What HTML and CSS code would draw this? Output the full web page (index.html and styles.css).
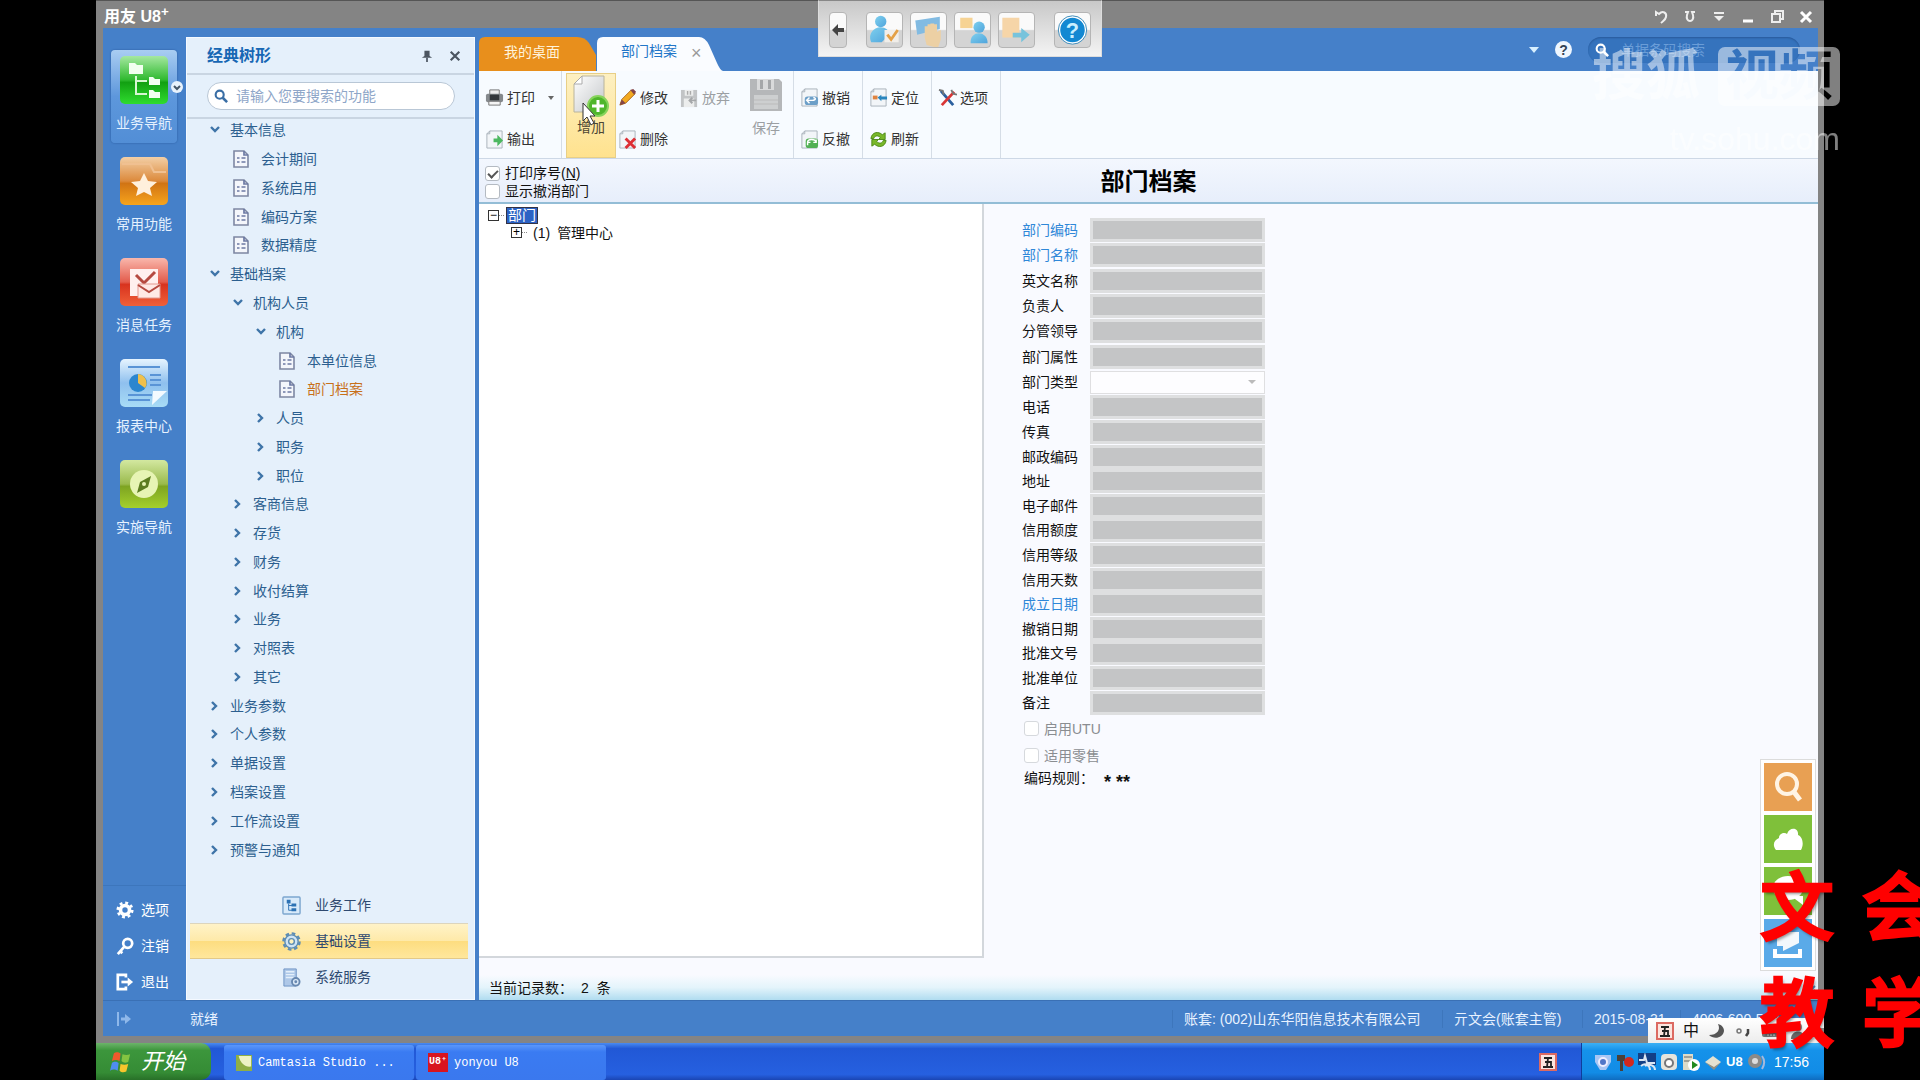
FILE: index.html
```
<!DOCTYPE html>
<html lang="zh-CN">

<head>
  <meta charset="UTF-8">
  <meta name="viewport" content="width=device-width, initial-scale=1.0">
  <title>部门档案</title>
  <link rel="stylesheet" href="styles.css">
</head>

<body>

  <!-- shared icons -->
  <svg class="defs" aria-hidden="true">
    <defs>
      <linearGradient id="green" x2="0" y2="1"><stop offset="0" stop-color="#a5e8a0"/><stop offset=".5" stop-color="#2fb92f"/><stop offset=".55" stop-color="#12a012"/><stop offset="1" stop-color="#2fdc2f"/></linearGradient>
      <linearGradient id="orange" x2="0" y2="1"><stop offset="0" stop-color="#f3cfa6"/><stop offset=".5" stop-color="#dc8a3c"/><stop offset=".55" stop-color="#d17414"/><stop offset="1" stop-color="#f7a41c"/></linearGradient>
      <linearGradient id="red" x2="0" y2="1"><stop offset="0" stop-color="#f9b7ac"/><stop offset=".5" stop-color="#e35c4c"/><stop offset=".55" stop-color="#d8331f"/><stop offset="1" stop-color="#f06038"/></linearGradient>
      <linearGradient id="sky" x2="0" y2="1"><stop offset="0" stop-color="#e6f4ff"/><stop offset=".5" stop-color="#8fc0ee"/><stop offset="1" stop-color="#a8dcf6"/></linearGradient>
      <linearGradient id="lime" x2="0" y2="1"><stop offset="0" stop-color="#d3e8a0"/><stop offset=".5" stop-color="#9aba4c"/><stop offset=".55" stop-color="#7ea422"/><stop offset="1" stop-color="#a4d02c"/></linearGradient>
      <linearGradient id="paper" x2="1" y2="1"><stop offset="0" stop-color="#fff"/><stop offset="1" stop-color="#c3c6c9"/></linearGradient>
      <linearGradient id="cyan" x2="1" y2="1"><stop offset="0" stop-color="#7fd0ee"/><stop offset="1" stop-color="#4fa4dc"/></linearGradient>
    </defs>
    <symbol id="down" viewBox="0 0 12 12"><path d="M2 3l4 4 4-4" fill="none" stroke="#3e74a8" stroke-width="2.4"/></symbol>
    <symbol id="right" viewBox="0 0 12 12"><path d="M3 2l4 4-4 4" fill="none" stroke="#3e74a8" stroke-width="2.4"/></symbol>
    <symbol id="doc" viewBox="0 0 16 18"><path d="M1 1h10l4 4v12H1z" fill="#f4f6fb" stroke="#7d87a3" stroke-width="1.6"/><path d="M11 1v4h4M4 8h2.500M4 12h2.500M8.500 8h4M8.500 12h4" fill="none" stroke="#6c7aa4" stroke-width="1.700"/></symbol>
    <symbol id="lens" viewBox="0 0 16 16"><circle cx="6.500" cy="6.500" r="4.600" fill="none" stroke="currentColor" stroke-width="2.400"/><path d="M10 10l5 5" stroke="currentColor" stroke-width="3"/></symbol>
    <symbol id="sheet" viewBox="0 0 20 20"><path d="M5 1h13v18H2V4z" fill="#f2f5f8" stroke="#a9b2ba"/><path d="M5 1v3H2" fill="none" stroke="#a9b2ba"/></symbol>
    <symbol id="wubi" viewBox="0 0 18 18"><path d="M1 1h16v16H1z" fill="#fbe5df" stroke="#dc6a62" stroke-width="2"/><path d="M5 5h8M9 5l-1 9M6 9h6v5M4 14h10" fill="none" stroke="#222" stroke-width="1.800"/></symbol>
  </svg>

  <div class="screen">

    <header class="titlebar">
      <span class="brand">用友 <b>U8</b><sup>+</sup></span>
      <div class="window-tools">
        <button aria-label="撤回"><svg viewBox="0 0 16 16"><path d="M3 7V3l3 2c4-4 8-1 7 3-.5 3-3 4-5 6" fill="none" stroke="#eee" stroke-width="2"/></svg></button>
        <button aria-label="磁吸"><svg viewBox="0 0 16 16"><path d="M3 3h3L5 6c-2 8 8 8 6 0l-1-3h3" fill="none" stroke="#eee" stroke-width="2"/></svg></button>
        <button aria-label="菜单" class="split"><svg viewBox="0 0 16 16"><path d="M3 4h10" stroke="#eee" stroke-width="2"/><path d="M3 7h10l-5 5z" fill="#eee"/></svg></button>
        <button aria-label="最小化"><svg viewBox="0 0 16 16"><path d="M3 12h10" stroke="#fff" stroke-width="3"/></svg></button>
        <button aria-label="还原"><svg viewBox="0 0 16 16"><path d="M6 5V2h8v8h-3M3 5h8v8H3z" fill="none" stroke="#eee" stroke-width="2"/></svg></button>
        <button aria-label="关闭"><svg viewBox="0 0 16 16"><path d="M3 3l10 10M13 3L3 13" stroke="#fff" stroke-width="3"/></svg></button>
      </div>
    </header>

    <div class="app">
      <nav class="rail">
        <a href="#" class="rail-item active">
          <svg viewBox="0 0 48 48"><rect width="48" height="48" rx="5" fill="url(#green)"/><path d="M9 7h6l2 2h6v9H9zM29 21h4l2 2h5v6H29zM29 34h4l2 2h5v6H29z" fill="#f2fff0"/><path d="M16 20v18h11M16 25h11" fill="none" stroke="#d6f7d2" stroke-width="2"/></svg>
          业务导航
          <svg class="rail-more" viewBox="0 0 12 12"><circle cx="6" cy="6" r="6" fill="#e8f2fc"/><path d="M3 5l3 3 3-3" fill="none" stroke="#456" stroke-width="2"/></svg>
        </a>
        <a href="#" class="rail-item">
          <svg viewBox="0 0 48 48"><rect width="48" height="48" rx="5" fill="url(#orange)"/><path d="M2 7h28l4 8h12" fill="none" stroke="#f0c091" stroke-width="2"/><path d="M24 16l4 8 9 1-7 6 2 8-8-4-8 4 2-8-7-6 9-1z" fill="#fff0dc"/></svg>
          常用功能
        </a>
        <a href="#" class="rail-item">
          <svg viewBox="0 0 48 48"><rect width="48" height="48" rx="5" fill="url(#red)"/><path d="M10 11h28v27H10z" fill="#fff0ee"/><path d="M16 17l8 8 11-11" fill="none" stroke="#b54a40" stroke-width="3"/><path d="M18 26h22v14H18z" fill="#ffe9e5" stroke="#e39a90"/><path d="M18 27l11 7 11-7" fill="none" stroke="#b54a40" stroke-width="2"/></svg>
          消息任务
        </a>
        <a href="#" class="rail-item">
          <svg viewBox="0 0 48 48"><rect width="48" height="48" rx="5" fill="url(#sky)"/><path d="M8 8h32M30 16h11M30 21h11M30 26h11M8 36h24M8 41h22" stroke="#5a94d6" stroke-width="2"/><circle cx="18" cy="24" r="9" fill="#2c86cf"/><path d="M18 24v-9a9 9 0 0 1 7 14z" fill="#f0c04c"/><path d="M32 46l1-14h14z" fill="#f3faff"/></svg>
          报表中心
        </a>
        <a href="#" class="rail-item">
          <svg viewBox="0 0 48 48"><rect width="48" height="48" rx="5" fill="url(#lime)"/><circle cx="24" cy="24" r="14" fill="#e7f4b4"/><path d="M31 16l-3 11-11 6 3-11z" fill="#5c7c20"/><circle cx="24" cy="24" r="2" fill="#e7f4b4"/></svg>
          实施导航
        </a>
        <div class="rail-tools">
          <button><svg viewBox="0 0 20 20"><circle cx="10" cy="10" r="5" fill="none" stroke="#fff" stroke-width="4"/><circle cx="10" cy="10" r="8" fill="none" stroke="#fff" stroke-width="3" stroke-dasharray="3.200 3.080"/></svg>选项</button>
          <button><svg viewBox="0 0 20 20"><circle cx="13" cy="7" r="5" fill="none" stroke="#fff" stroke-width="3"/><path d="M9 11l-7 8M4 15l3 3" stroke="#fff" stroke-width="3"/></svg>注销</button>
          <button><svg viewBox="0 0 20 20"><path d="M11 5V2H2v16h9v-3" fill="none" stroke="#fff" stroke-width="3"/><path d="M6 10h8" stroke="#fff" stroke-width="3"/><path d="M13 5l6 5-6 5z" fill="#fff"/></svg>退出</button>
        </div>
      </nav>

      <aside class="panel">
        <div class="panel-head">
          <h2>经典树形</h2>
          <button aria-label="固定"><svg viewBox="0 0 14 14"><path d="M4 1h6v6l3 2H1l3-2z" fill="#4c5560"/><path d="M7 9v5" stroke="#4c5560" stroke-width="2"/></svg></button>
          <button aria-label="关闭面板"><svg viewBox="0 0 14 14"><path d="M2 2l10 10M12 2L2 12" stroke="#4c5560" stroke-width="2.500"/></svg></button>
        </div>
        <div class="panel-search">
          <label><svg><use href="#lens"/></svg><input type="text" placeholder="请输入您要搜索的功能" aria-label="搜索功能"></label>
        </div>
        <ul class="tree">
          <li><a href="#"><svg><use href="#down"/></svg>基本信息</a></li>
          <li class="leaf"><a href="#"><svg><use href="#doc"/></svg>会计期间</a></li>
          <li class="leaf"><a href="#"><svg><use href="#doc"/></svg>系统启用</a></li>
          <li class="leaf"><a href="#"><svg><use href="#doc"/></svg>编码方案</a></li>
          <li class="leaf"><a href="#"><svg><use href="#doc"/></svg>数据精度</a></li>
          <li><a href="#"><svg><use href="#down"/></svg>基础档案</a></li>
          <li class="level-1"><a href="#"><svg><use href="#down"/></svg>机构人员</a></li>
          <li class="level-2"><a href="#"><svg><use href="#down"/></svg>机构</a></li>
          <li class="leaf leaf-deep"><a href="#"><svg><use href="#doc"/></svg>本单位信息</a></li>
          <li class="leaf leaf-deep current"><a href="#"><svg><use href="#doc"/></svg>部门档案</a></li>
          <li class="level-2"><a href="#"><svg><use href="#right"/></svg>人员</a></li>
          <li class="level-2"><a href="#"><svg><use href="#right"/></svg>职务</a></li>
          <li class="level-2"><a href="#"><svg><use href="#right"/></svg>职位</a></li>
          <li class="level-1"><a href="#"><svg><use href="#right"/></svg>客商信息</a></li>
          <li class="level-1"><a href="#"><svg><use href="#right"/></svg>存货</a></li>
          <li class="level-1"><a href="#"><svg><use href="#right"/></svg>财务</a></li>
          <li class="level-1"><a href="#"><svg><use href="#right"/></svg>收付结算</a></li>
          <li class="level-1"><a href="#"><svg><use href="#right"/></svg>业务</a></li>
          <li class="level-1"><a href="#"><svg><use href="#right"/></svg>对照表</a></li>
          <li class="level-1"><a href="#"><svg><use href="#right"/></svg>其它</a></li>
          <li><a href="#"><svg><use href="#right"/></svg>业务参数</a></li>
          <li><a href="#"><svg><use href="#right"/></svg>个人参数</a></li>
          <li><a href="#"><svg><use href="#right"/></svg>单据设置</a></li>
          <li><a href="#"><svg><use href="#right"/></svg>档案设置</a></li>
          <li><a href="#"><svg><use href="#right"/></svg>工作流设置</a></li>
          <li><a href="#"><svg><use href="#right"/></svg>预警与通知</a></li>
        </ul>
        <div class="modules">
          <button><svg viewBox="0 0 20 20"><rect x="1" y="1" width="18" height="18" rx="1" fill="#d8eafa" stroke="#7ca6cf" stroke-width="1.500"/><path d="M5 4h4v4H5zM10 8h5v3h-5zM10 13h5v3h-5z" fill="#2c72b4"/><path d="M7 8v7h4M7 10h4" fill="none" stroke="#2c72b4"/></svg>业务工作</button>
          <button class="active"><svg viewBox="0 0 20 20"><circle cx="10" cy="10" r="8.500" fill="none" stroke="#5c8cb4" stroke-width="2.500" stroke-dasharray="3.800 2.870"/><circle cx="10" cy="10" r="7" fill="#cfe4f4" stroke="#5c8cb4" stroke-width="1.500"/><circle cx="10" cy="10" r="3" fill="#fff3c0" stroke="#5c8cb4" stroke-width="1.500"/></svg>基础设置</button>
          <button><svg viewBox="0 0 20 20"><path d="M2 1h13v18H2z" fill="#aec8e8" stroke="#6f93c4"/><path d="M4 4h9M4 7h9M4 10h9" stroke="#e4effa" stroke-width="1.500"/><circle cx="14.500" cy="14.500" r="4" fill="#dbe9f7" stroke="#6888b0" stroke-width="2"/><circle cx="14.500" cy="14.500" r="1.500" fill="#6888b0"/></svg>系统服务</button>
        </div>
      </aside>

      <main class="content">
        <div class="tabs">
          <button class="tab tab-home">我的桌面</button>
          <button class="tab tab-current">部门档案 <span class="tab-close">×</span></button>
          <div class="top-tools">
            <button class="caret" aria-label="展开"></button>
            <button class="help" aria-label="帮助">?</button>
            <label class="top-search"><svg><use href="#lens"/></svg><input type="text" placeholder="单据条码搜索" aria-label="单据条码搜索"></label>
          </div>
        </div>

        <div class="toolbar">
          <div class="tool-group print">
            <button class="tool"><svg viewBox="0 0 20 20"><path d="M5 2h10v5H5z" fill="#eee" stroke="#777"/><rect x="1" y="6" width="18" height="9" rx="2" fill="#85898d"/><path d="M5 7h10v6H5z" fill="#33373b"/><path d="M4 14h12v4H4z" fill="#f4f4f4" stroke="#777"/></svg>打印<i class="tool-caret"></i></button>
            <button class="tool"><svg viewBox="0 0 20 20"><use href="#sheet"/><path d="M9 9h4V5l6 6-6 6v-4H9z" fill="#4cb860"/></svg>输出</button>
          </div>
          <button class="tool-big hot">
            <svg viewBox="0 0 36 42"><path d="M9 1h22v36H1V9z" fill="url(#paper)" stroke="#b9b49c"/><path d="M9 1v8H1z" fill="#fff" stroke="#aaa"/><circle cx="25" cy="31" r="10" fill="#4fb62c" stroke="#87d45c" stroke-width="2"/><path d="M19 31h12M25 25v12" stroke="#fff" stroke-width="3"/></svg>
            增加
          </button>
          <div class="tool-group edit">
            <button class="tool"><svg viewBox="0 0 20 20"><path d="M2 18l2-6L14 2l4 4L8 16z" fill="#f3aa20" stroke="#a9651a"/><path d="M2 18l2-6 4 4zM13 2l3-1 3 3-2 3z" fill="#83444a"/></svg>修改</button>
            <button class="tool"><svg viewBox="0 0 20 20"><use href="#sheet"/><path d="M8 9l10 10M18 9L8 19" stroke="#dd2f35" stroke-width="3"/></svg>删除</button>
          </div>
          <div class="tool-group discard">
            <button class="tool" disabled><svg viewBox="0 0 20 20"><path d="M1 1h17v18H1z" fill="#c2c4c6"/><path d="M5 1h9v6H5zM4 10h11v9H4z" fill="#eceded"/><path d="M8 2v4M11 2v4" stroke="#aaa" stroke-width="1.500"/><path d="M17 12h-7m3-3l-3 3 3 3" fill="none" stroke="#a5a7a9" stroke-width="2"/></svg>放弃</button>
          </div>
          <button class="tool-big save" disabled>
            <svg viewBox="0 0 32 32"><path d="M0 0h29l3 3v29H0z" fill="#b5b7b9"/><path d="M7 0h17v11H7z" fill="#d9dadb"/><path d="M10 1h3v9h-3zM18 1h3v9h-3z" fill="#a5a7a9"/><path d="M4 16h24v14H4z" fill="#cdcfd0"/><path d="M4 21h24M4 25h24" stroke="#bbb"/></svg>
            保存
          </button>
          <div class="tool-group">
            <button class="tool"><svg viewBox="0 0 20 20"><use href="#sheet"/><rect x="5" y="9" width="14" height="9" rx="3" fill="#6c9fc8"/><path d="M10 10l-3 3 3 3M8 13h5c4 0 4-3 1-3" fill="none" stroke="#fff" stroke-width="1.500"/></svg>撤销</button>
            <button class="tool"><svg viewBox="0 0 20 20"><use href="#sheet"/><rect x="6" y="9" width="13" height="10" rx="3" fill="#52b054"/><path d="M8 13c0-4 8-4 9 0M17 10v3h-3M8 16v-3h3" fill="none" stroke="#fff" stroke-width="1.500"/></svg>反撤</button>
          </div>
          <div class="tool-group">
            <button class="tool"><svg viewBox="0 0 20 20"><use href="#sheet"/><path d="M4 8h5v4H4z" fill="#de8340"/><path d="M9 10l4-3v2h6v3h-6v2z" fill="#2a86be"/></svg>定位</button>
            <button class="tool"><svg viewBox="0 0 20 20"><path d="M2 9c1-7 8-8 12-4l3-2v7h-7l2-2C9 5 6 6 5 9zM18 11c-1 7-8 8-12 4l-3 2v-7h7l-2 2c3 3 6 2 7-1z" fill="#79b829" stroke="#4d8a18"/></svg>刷新</button>
          </div>
          <div class="tool-group">
            <button class="tool"><svg viewBox="0 0 20 20"><path d="M3 2l13 15" stroke="#2b5f9e" stroke-width="3"/><path d="M17 3L4 17" stroke="#d93636" stroke-width="3"/><path d="M1 1l4 1 1 4M14 1l2 4 4 1" fill="none" stroke="#777" stroke-width="2"/></svg>选项</button>
          </div>
        </div>

        <div class="page-head">
          <div class="page-options">
            <label><input type="checkbox" checked><span>打印序号(<u>N</u>)</span></label>
            <label><input type="checkbox"><span>显示撤消部门</span></label>
          </div>
          <h1>部门档案</h1>
        </div>

        <div class="page-body">
          <div class="departments">
            <div class="dept"><button class="toggle" aria-label="折叠">−</button><span class="selected">部门</span></div>
            <div class="dept dept-child"><button class="toggle" aria-label="展开">+</button><span>(1)</span><span>管理中心</span></div>
          </div>

          <form class="details">
            <div class="fields fields-basic">
              <div class="field required"><label for="code">部门编码</label><input id="code" disabled></div>
              <div class="field required"><label for="name">部门名称</label><input id="name" disabled></div>
              <div class="field"><label for="ename">英文名称</label><input id="ename" disabled></div>
              <div class="field"><label for="head">负责人</label><input id="head" disabled></div>
              <div class="field"><label for="leader">分管领导</label><input id="leader" disabled></div>
              <div class="field"><label for="attr">部门属性</label><input id="attr" disabled></div>
              <div class="field"><label for="kind">部门类型</label><span class="select-wrap"><select id="kind" disabled><option></option></select></span></div>
            </div>
            <div class="fields fields-more">
              <div class="field"><label for="tel">电话</label><input id="tel" disabled></div>
              <div class="field"><label for="fax">传真</label><input id="fax" disabled></div>
              <div class="field"><label for="zip">邮政编码</label><input id="zip" disabled></div>
              <div class="field"><label for="addr">地址</label><input id="addr" disabled></div>
              <div class="field"><label for="mail">电子邮件</label><input id="mail" disabled></div>
              <div class="field"><label for="credit">信用额度</label><input id="credit" disabled></div>
              <div class="field"><label for="grade">信用等级</label><input id="grade" disabled></div>
              <div class="field"><label for="days">信用天数</label><input id="days" disabled></div>
              <div class="field required"><label for="start">成立日期</label><input id="start" disabled></div>
              <div class="field"><label for="end">撤销日期</label><input id="end" disabled></div>
              <div class="field"><label for="docno">批准文号</label><input id="docno" disabled></div>
              <div class="field"><label for="unit">批准单位</label><input id="unit" disabled></div>
              <div class="field"><label for="memo">备注</label><input id="memo" disabled></div>
            </div>
            <label class="flag"><input type="checkbox" disabled>启用UTU</label>
            <label class="flag"><input type="checkbox" disabled>适用零售</label>
            <p class="rule">编码规则： <b>* **</b></p>
          </form>

          <div class="float-tools">
            <button class="f-search" aria-label="搜索"><svg viewBox="0 0 48 48"><circle cx="23" cy="21" r="10" fill="none" stroke="#fff4e4" stroke-width="4"/><path d="M30 29l6 8" stroke="#fff4e4" stroke-width="5"/></svg></button>
            <button class="f-cloud" aria-label="云"><svg viewBox="0 0 48 48"><path d="M12 35c-4-5-2-10 3-12 0-5 6-6 8-4 3-8 12-6 11 1 5 2 6 10 3 15z" fill="#fff"/></svg></button>
            <button class="f-cloud" aria-label="消息"><svg viewBox="0 0 48 48"><ellipse cx="24" cy="21" rx="15" ry="12" fill="#fff"/><path d="M27 29h12v9z" fill="#fff"/></svg></button>
            <button class="f-edit" aria-label="编辑"><svg viewBox="0 0 48 48"><path d="M11 30v7h25v-7" fill="none" stroke="#fff" stroke-width="4"/><path d="M13 13h22v11L19 32v-5h-6z" fill="#f3f8fc"/></svg></button>
          </div>
        </div>

        <footer class="record-bar">
          <span>当前记录数：</span>
          <span>2</span>
          <span>条</span>
          <svg viewBox="0 0 12 12"><path d="M1 11L11 1M5 11l6-6M9 11l2-2" stroke="#5b84b5" stroke-width="2"/></svg>
        </footer>
      </main>
    </div>

    <div class="statusbar">
      <svg viewBox="0 0 14 14"><path d="M1 0v14" stroke="#8fb8ea" stroke-width="2"/><path d="M4 7h5" stroke="#8fb8ea" stroke-width="3"/><path d="M8 2l6 5-6 5z" fill="#8fb8ea"/></svg>
      <span class="ready">就绪</span>
      <span class="cell account">账套: (002)山东华阳信息技术有限公司</span>
      <span class="cell user">亓文会(账套主管)</span>
      <span class="cell date">2015-08-31</span>
      <span class="cell phone">4006-600-588</span>
    </div>

    <div class="taskbar">
      <button class="start"><svg viewBox="0 0 24 22"><path d="M4 2c3-2 5-1 7 0l-1 8c-2-1-5-2-8 0z" fill="#ef5a2c"/><path d="M13 3c3 1 5 1 8 0l-2 8c-3 1-5 1-7-1z" fill="#84c441"/><path d="M2 12c3-2 5-1 7 0l-1 8c-2-1-5-2-8 0z" fill="#4f8df0"/><path d="M11 13c3 1 5 1 8 0l-2 8c-3 1-5 1-7-1z" fill="#f8c62c"/></svg>开始</button>
      <button class="task"><svg viewBox="0 0 18 18"><rect width="18" height="18" fill="#8fae45"/><path d="M3 1h14v12C10 14 5 9 3 1z" fill="#eef2c4"/></svg>Camtasia Studio ...</button>
      <button class="task"><span class="u8">U8⁺</span>yonyou U8</button>
      <svg class="lang" viewBox="0 0 18 18"><use href="#wubi"/></svg>
      <div class="tray">
        <svg viewBox="0 0 18 18"><path d="M1 2h16v7l-5 8H6L1 9z" fill="#a9c6f4"/><circle cx="9" cy="9" r="4" fill="#5176c8" stroke="#eef" stroke-width="2"/></svg>
        <svg viewBox="0 0 18 18"><path d="M1 2h8v6H7v10H4V8H1z" fill="#4a4038"/><circle cx="13" cy="9" r="5" fill="#d2281e"/></svg>
        <svg viewBox="0 0 18 18"><path d="M0 0h18v12H0z" fill="#133f86"/><path d="M1 7h5l1-4 2 7h8M3 13c5-4 9 0 9 4M7 13c5-3 10 0 10 4" fill="none" stroke="#dce6f2" stroke-width="2"/></svg>
        <svg viewBox="0 0 18 18"><rect x="1" y="1" width="16" height="16" rx="4" fill="#e6e4dc"/><circle cx="9" cy="10" r="4" fill="#fff" stroke="#76777a" stroke-width="2"/></svg>
        <svg viewBox="0 0 18 18"><path d="M1 1h10v16H1z" fill="#dedbc8"/><path d="M2 4h8M2 8h8" stroke="#666"/><circle cx="12" cy="12" r="6" fill="#fff"/><path d="M10 8l6 4-6 4z" fill="#208a20"/></svg>
        <svg viewBox="0 0 18 18"><path d="M1 9l8-6 8 6-7 7z" fill="#e3e2d1"/><path d="M1 9l9 5 7-5-7 8z" fill="#908f80"/></svg>
        <span class="tray-u8">U8</span>
        <svg viewBox="0 0 18 18"><circle cx="7" cy="8" r="7" fill="#8b8a88"/><circle cx="7" cy="8" r="3" fill="#ddd"/><path d="M14 3c3 4 3 8 0 13" fill="none" stroke="#a4b9dc" stroke-width="2"/></svg>
        <time>17:56</time>
      </div>
    </div>

    <!-- screen sharing toolbar -->
    <div class="share-bar">
      <button class="back" aria-label="收起"><svg viewBox="0 0 14 14"><path d="M7 1v4h6v4H7v4L1 7z" fill="#444"/></svg></button>
      <button aria-label="出席"><svg viewBox="0 0 36 36"><circle cx="14" cy="9" r="6" fill="url(#cyan)"/><path d="M4 31c-4-8 2-16 10-16 5 0 9 3 9 8l-8 8z" fill="url(#cyan)"/><path d="M18 18h15v13H18z" fill="#f1eee9"/><path d="M21 23l4 5 7-10" fill="none" stroke="#e4a046" stroke-width="3"/></svg></button>
      <button aria-label="举手"><svg viewBox="0 0 36 36"><path d="M4 8l26-4v13L6 23z" fill="#82bbe2"/><path d="M16 34l-2-8V14h3v5-7h3v7-8h4v8-7h3v8l4-2v10l-3 9z" fill="#ecd0a4"/></svg></button>
      <button aria-label="共享"><svg viewBox="0 0 36 36"><path d="M5 5h13v11H5z" fill="#f6d394"/><circle cx="25" cy="15" r="6" fill="url(#cyan)"/><path d="M16 32c-1-14 18-14 18 0z" fill="url(#cyan)"/></svg></button>
      <button aria-label="传送"><svg viewBox="0 0 36 36"><path d="M3 5h18v21H3z" fill="#f6d5a8"/><path d="M14 21h9v-5l9 7-9 8v-5h-9z" fill="#77c3dc"/></svg></button>
      <button class="share-help" aria-label="帮助"><svg viewBox="0 0 36 36"><circle cx="18" cy="18" r="14" fill="#1288d2" stroke="#fff" stroke-width="2"/><circle cx="18" cy="18" r="15" fill="none" stroke="#3586b6"/><text x="18" y="26" text-anchor="middle">?</text></svg></button>
    </div>

    <!-- input method bar -->
    <div class="ime">
      <svg viewBox="0 0 18 18"><use href="#wubi"/></svg>
      <span>中</span>
      <svg viewBox="0 0 18 18"><path d="M10 2c3 6-1 11-9 11 5 5 14 3 15-4 0-3-2-6-6-7z" fill="#555"/></svg>
      <svg viewBox="0 0 18 18"><circle cx="4" cy="9" r="2" fill="none" stroke="#777" stroke-width="1.500"/><path d="M13 7v4l-2 3" fill="none" stroke="#444" stroke-width="2.500"/></svg>
      <svg viewBox="0 0 18 18"><rect y="4" width="18" height="11" rx="2" fill="#777"/><path d="M3 7h12M3 10h12M5 13h8" stroke="#ddd" stroke-dasharray="2 1"/></svg>
      <svg viewBox="0 0 18 18"><circle cx="9" cy="5" r="4" fill="#888"/><path d="M2 17c0-10 14-10 14 0z" fill="#666"/></svg>
      <svg viewBox="0 0 18 18"><path d="M2 6h8l4-3v5l-4 1-4 7z" fill="#888"/></svg>
    </div>

    <svg class="cursor" viewBox="0 0 14 24"><path d="M1 1v18l4-4 4 8 3-2-4-7h5z" fill="#fff" stroke="#333"/></svg>
  </div>

  <svg class="watermark" viewBox="0 0 252 112">
    <mask id="cut"><rect width="252" height="112" fill="#fff"/><text class="wm-cut" x="135" y="49">视频</text></mask>
    <text class="wm-big" x="2" y="49">搜狐</text>
    <rect x="128" y="1" width="122" height="59" rx="7" mask="url(#cut)"/>
    <text class="wm-small" x="250" y="104" text-anchor="end">tv.sohu.com</text>
  </svg>

  <div class="stamp"><span>文</span><span>会</span><span>教</span><span>学</span></div>

</body>

</html>
```
FILE: styles.css
```
* {
  box-sizing: border-box;
}

body {
  margin: 0;
  height: 100vh;
  overflow: hidden;
  position: relative;
  background-color: #000;
  color: #111;
  font-family: "Liberation Sans", "Noto Sans CJK SC", sans-serif;
  font-size: 14px;
  line-height: 18px;
}

button {
  margin: 0;
  padding: 0;
  border: none;
  background: none;
  color: inherit;
  font: inherit;
}

input {
  font: inherit;
  min-width: 0;
}

a {
  color: inherit;
  text-decoration: none;
}

svg {
  flex: none;
}

.defs {
  position: absolute;
  width: 0;
  height: 0;
}

.screen {
  position: relative;
  display: flex;
  flex-direction: column;
  height: 100%;
  margin: 0 5%;
  background-color: #848484;
}

/* title bar */
.titlebar {
  display: flex;
  justify-content: space-between;
  align-items: center;
  height: 28px;
  padding: 4px 8px 0;
  border-top: 1px solid #555;
  color: #fff;
}

.brand {
  font-size: 16px;
  font-weight: bold;
}

.brand sup {
  line-height: 0;
}

.window-tools {
  display: flex;
  gap: 13px;
  padding-right: 2px;
}

.window-tools button {
  width: 16px;
  height: 16px;
}

.window-tools svg {
  display: block;
  width: 16px;
  height: 16px;
}

.app {
  display: flex;
  flex: 1;
  min-height: 0;
  margin: 0 6px 0 7px;
  padding-top: 9px;
  background-color: #4580c9;
}

/* left rail */
.rail {
  display: flex;
  flex-direction: column;
  gap: 8px;
  width: 83px;
  padding: 13px 9px 0 8px;
  color: #fff;
}

.rail-item {
  position: relative;
  display: flex;
  flex-direction: column;
  align-items: center;
  gap: 10px;
  height: 93px;
  padding-top: 6px;
  color: #e6f2ff;
}

.rail-item svg {
  width: 48px;
  height: 48px;
}

.rail-item.active {
  border-radius: 4px;
  background: linear-gradient(#a9cdf2, #5d97dc 50%, #528ed6);
  box-shadow: 0 0 2px #27569a;
}

.rail-item .rail-more {
  position: absolute;
  top: 31px;
  right: -6px;
  width: 12px;
  height: 12px;
}

.rail-tools {
  display: flex;
  flex-direction: column;
  margin: auto -9px 0 -8px;
  padding-top: 6px;
  border-top: 1px solid #3d76bc;
}

.rail-tools button {
  display: flex;
  align-items: center;
  gap: 7px;
  height: 36px;
  padding-left: 13px;
}

.rail-tools svg {
  width: 18px;
  height: 18px;
}

/* navigation panel */
.panel {
  display: flex;
  flex-direction: column;
  width: 289px;
  background-color: #e5f0fb;
  border: 1px solid #f4f9ff;
  color: #2c5f8f;
}

.panel-head {
  display: flex;
  align-items: center;
  gap: 16px;
  height: 37px;
  padding: 0 13px 0 20px;
  border-bottom: 2px solid #c9d5e2;
}

.panel-head h2 {
  flex: 1;
  margin: 0;
  color: #1767b4;
  font-size: 16px;
}

.panel-head svg {
  display: block;
  width: 12px;
  height: 12px;
}

.panel-search {
  padding: 7px 19px 7px 20px;
  border-bottom: 2px solid #c9d5e2;
}

.panel-search label {
  display: flex;
  align-items: center;
  gap: 8px;
  height: 28px;
  padding: 0 6px;
  border: 1px solid #b9c7d6;
  border-radius: 14px;
  background-color: #fff;
  color: #3a6ea5;
}

.panel-search svg {
  width: 14px;
  height: 14px;
}

.panel-search input {
  flex: 1;
  padding: 0;
  border: none;
  background: none;
}

.panel-search input::placeholder {
  color: #8ea6c8;
}

.tree {
  display: flex;
  flex-direction: column;
  flex: 1;
  margin: -3px 0 23px;
  padding: 0;
  list-style: none;
}

.tree li {
  display: flex;
  flex: 1;
  align-items: center;
  padding-left: 22px;
}

.tree a {
  display: flex;
  align-items: center;
  gap: 9px;
}

.tree svg {
  width: 12px;
  height: 12px;
}

.tree .level-1 {
  padding-left: 45px;
}

.tree .level-2 {
  padding-left: 68px;
}

.tree .leaf {
  padding-left: 46px;
}

.tree .leaf-deep {
  padding-left: 92px;
}

.tree .leaf a {
  gap: 12px;
}

.tree .leaf svg {
  width: 16px;
  height: 18px;
}

.tree .current {
  color: #c8701a;
}

.modules {
  display: flex;
  flex-direction: column;
  padding: 0 6px 4px 3px;
}

.modules button {
  display: flex;
  align-items: center;
  gap: 14px;
  height: 36px;
  padding-left: 92px;
  color: #2f4a70;
}

.modules .active {
  background: linear-gradient(#fff3c8, #fee9a8 50%, #fddd80 51%, #ffe79c);
  border-top: 1px solid #dcd5bd;
  border-bottom: 1px solid #e3c988;
}

.modules svg {
  width: 19px;
  height: 19px;
}

/* tabs */
.content {
  display: flex;
  flex-direction: column;
  flex: 1;
  min-width: 0;
  margin-left: 4px;
}

.tabs {
  display: flex;
  height: 34px;
}

.tab {
  padding-bottom: 4px;
  text-align: left;
}

.tab-home {
  width: 118px;
  padding-left: 25px;
  background-color: #e88f1c;
  color: #fff4dc;
  clip-path: path("M0 34V6Q0 0 6 0H98Q106 0 110 6L117 18V34Z");
}

.tab-current {
  width: 126px;
  padding-left: 24px;
  background-color: #fafcff;
  color: #2276c8;
  clip-path: path("M0 34V6Q0 0 6 0H102Q108 0 112 8L120 26Q123 33 126 34Z");
}

.tab-close {
  margin-left: 10px;
  color: #999;
  font-size: 18px;
  vertical-align: middle;
}

.top-tools {
  display: flex;
  align-items: center;
  gap: 16px;
  margin-left: auto;
  padding: 0 18px 9px 0;
}

.caret {
  border: 5px solid transparent;
  border-top: 6px solid #d8f0ff;
  border-bottom: 0;
}

.help {
  width: 17px;
  height: 17px;
  border-radius: 9px;
  background-color: #eef6ff;
  color: #345;
  font-weight: bold;
}

.top-search {
  display: flex;
  align-items: center;
  gap: 12px;
  width: 212px;
  height: 26px;
  padding-left: 7px;
  border-radius: 13px;
  background-color: #3573bd;
  box-shadow: inset 0 1px 2px #28599a;
  color: #fff;
}

.top-search svg {
  width: 14px;
  height: 14px;
}

.top-search input {
  width: 140px;
  padding: 0;
  border: none;
  background: none;
}

.top-search input::placeholder {
  color: #6a9dd8;
}

/* toolbar */
.toolbar {
  display: flex;
  height: 88px;
  background-color: #f7fbff;
  border-bottom: 1px solid #cdd8e6;
}

.tool-group {
  display: flex;
  flex-direction: column;
  gap: 4px;
  padding: 8px 12px 0 6px;
  border-right: 1px solid #d5dde6;
}

.print {
  padding-right: 10px;
}

.tool {
  display: flex;
  align-items: center;
  gap: 3px;
  height: 38px;
  color: #333;
}

.tool svg {
  width: 19px;
  height: 19px;
}

.tool:disabled,
.save:disabled {
  color: #9b9fa3;
}

.tool-caret {
  margin: 0 -3px 0 10px;
  border: 3px solid transparent;
  border-top: 4px solid #666;
  border-bottom: 0;
}

.tool-big {
  display: flex;
  flex-direction: column;
  align-items: center;
}

.hot {
  width: 50px;
  height: 85px;
  margin: 2px 0 0 4px;
  border: 1px solid #e8cf86;
  background: linear-gradient(#fdf0c2, #ffe28e);
  color: #4d4632;
}

.hot svg {
  width: 36px;
  height: 44px;
}

.edit,
.discard {
  padding: 8px 12px 0 2px;
  border: none;
}

.discard {
  padding: 8px 20px 0 0;
}

.save {
  gap: 8px;
  height: 87px;
  padding: 8px 11px 0 0;
  border-right: 1px solid #d5dde6;
}

.save svg {
  width: 32px;
  height: 32px;
}

/* page heading */
.page-head {
  display: grid;
  grid-template-columns: 1fr auto 1fr;
  align-items: center;
  height: 45px;
  padding: 3px 6px 0;
  background: linear-gradient(#f3f7fe, #e7eefb);
  border-bottom: 2px solid #93bdd6;
}

.page-head h1 {
  margin: 0;
  color: #000;
  font-size: 24px;
  line-height: 30px;
}

.page-options {
  display: flex;
  flex-direction: column;
}

.page-options label,
.flag {
  display: flex;
  align-items: center;
  gap: 5px;
}

input[type="checkbox"] {
  appearance: none;
  width: 15px;
  height: 15px;
  margin: 0;
  border: 1px solid #b4bac2;
  border-radius: 3px;
  background-color: #fff;
}

input[type="checkbox"]:checked::after {
  content: "";
  display: block;
  width: 8px;
  height: 4px;
  margin: 3px 2px;
  border-left: 2px solid #555;
  border-bottom: 2px solid #555;
  transform: rotate(-45deg);
}

/* body */
.page-body {
  position: relative;
  display: flex;
  flex: 1;
  min-height: 0;
  background-color: #f9faff;
}

.departments {
  width: 505px;
  padding: 3px 9px;
  background-color: #fff;
  border-right: 2px solid #d3d7dc;
  border-bottom: 2px solid #d3d7dc;
}

.dept {
  display: flex;
  align-items: center;
  height: 17px;
}

.dept-child {
  padding-left: 23px;
}

.toggle {
  width: 11px;
  height: 11px;
  border: 1px solid #333;
  color: #000;
  font-size: 12px;
  line-height: 9px;
}

/* short connector between the box and the node */
.dept::before {
  content: "";
  order: 1;
  width: 5px;
  border-top: 1px dotted #888;
}

.dept span {
  order: 2;
  margin-left: 2px;
  padding: 0 1px;
}

.dept-child span {
  margin-left: 5px;
}

.dept .selected {
  border: 1px solid #334;
  background-color: #2c62c4;
  color: #fff;
  line-height: 15px;
}

.details {
  padding: 13px 0 0 38px;
}

.fields {
  display: grid;
  grid-auto-rows: 1fr;
}

.fields-basic {
  height: 178px;
}

.fields-more {
  height: 320px;
}

.field {
  display: grid;
  grid-template-columns: 68px 175px;
  align-items: center;
}

.required {
  color: #2f87d8;
}

.field input {
  height: 24px;
  padding: 0;
  border: 3px solid #dedfe0;
  background-color: #c4c5c6;
}

.select-wrap {
  position: relative;
  display: flex;
}

.select-wrap select {
  appearance: none;
  flex: 1;
  height: 23px;
  border: 1px solid #d5d5d5;
  background-color: #fff;
}

.select-wrap::after {
  content: "";
  position: absolute;
  top: 9px;
  right: 9px;
  border: 4px solid transparent;
  border-top: 4px solid #bbb;
  border-bottom: 0;
}

.flag {
  height: 27px;
  padding-left: 2px;
  color: #8a8d91;
}

.details .flag input {
  border-color: #d6d9dd;
}

.rule {
  margin: 0;
  padding: 0 2px;
}

.rule b {
  margin-left: 6px;
  font-size: 18px;
  vertical-align: -5px;
}

.float-tools {
  position: absolute;
  right: 2px;
  bottom: -13px;
  display: flex;
  flex-direction: column;
  gap: 4px;
  padding: 3px;
  border: 1px solid #dcdcdc;
  background-color: #fff;
}

.float-tools button,
.float-tools svg {
  display: block;
  width: 48px;
  height: 48px;
}

.f-search {
  background-color: #e8a053;
}

.f-cloud {
  background-color: #7fc03a;
}

.f-edit {
  background-color: #5aaae8;
}

.record-bar {
  display: flex;
  align-items: flex-end;
  gap: 8px;
  height: 42px;
  padding: 0 2px 3px 10px;
  background: linear-gradient(#f9faff 40%, #e4f4fb 70%, #b0dcf0);
}

.record-bar svg {
  width: 12px;
  height: 12px;
  margin-left: auto;
}

/* status bar */
.statusbar {
  display: flex;
  align-items: center;
  height: 36px;
  margin: 0 6px 7px 7px;
  padding-left: 14px;
  background-color: #4580c9;
  border-top: 1px solid #3a70b5;
  color: #e8f2ff;
}

.statusbar svg {
  width: 14px;
  height: 14px;
}

.ready {
  flex: 1;
  margin-left: 59px;
}

.cell {
  padding-left: 11px;
  border-left: 1px solid #3d76bc;
}

.account {
  width: 270px;
}

.user {
  width: 140px;
}

.date {
  width: 98px;
}

.phone {
  width: 138px;
}

/* taskbar */
.taskbar {
  display: flex;
  gap: 2px;
  height: 37px;
  background: linear-gradient(#4a8bf0, #2158d6 15%, #2660e0 85%, #1a45b4);
  color: #fff;
}

.start {
  display: flex;
  align-items: center;
  gap: 8px;
  width: 115px;
  margin-right: 11px;
  padding-left: 14px;
  border-radius: 0 10px 10px 0;
  background: linear-gradient(#6cb46a, #3c963c 20%, #358c35 80%, #287028);
  font-size: 22px;
  font-style: italic;
}

.start svg {
  width: 23px;
  height: 22px;
}

.task {
  display: flex;
  align-items: center;
  gap: 6px;
  width: 190px;
  margin-top: 2px;
  padding-left: 12px;
  border-radius: 3px;
  background: linear-gradient(#5a96fa, #3a7bf2 20%, #3a78ee);
  font-family: "Liberation Mono", monospace;
  font-size: 12px;
}

.task svg {
  width: 16px;
  height: 18px;
}

.u8 {
  width: 20px;
  height: 19px;
  background-color: #d8141e;
  font-size: 10px;
  font-weight: bold;
  text-align: center;
}

.lang {
  align-self: center;
  width: 18px;
  height: 18px;
  margin: 0 22px 0 auto;
}

.tray {
  display: flex;
  align-items: center;
  gap: 4px;
  width: 243px;
  padding-left: 12px;
  border-left: 1px solid #0f3d9c;
  background: linear-gradient(#3cb0f4, #1592ea 20%, #128ce6 80%, #0f6cc0);
}

.tray svg {
  width: 18px;
  height: 18px;
}

.tray-u8 {
  width: 18px;
  font-size: 13px;
  font-weight: bold;
}

.tray time {
  margin-left: 4px;
}

/* overlays */
.share-bar {
  position: absolute;
  top: 0;
  left: 722px;
  display: flex;
  gap: 7px;
  height: 57px;
  padding: 11px 10px 0;
  border: 1px solid #ddd;
  border-top-color: #888;
  background: linear-gradient(#c8c8c8, #f4f4f4);
}

.share-bar button {
  width: 37px;
  height: 36px;
  border: 1px solid #b5b5b5;
  border-radius: 4px;
  background: linear-gradient(#fafafa 48%, #d4d4d4 52%);
}

.share-bar svg {
  display: block;
  width: 35px;
  height: 34px;
}

.share-bar .back {
  width: 18px;
  margin-right: 12px;
}

.share-bar .back svg {
  width: 14px;
  height: 14px;
  margin: 0 1px;
}

.share-bar .share-help {
  margin-left: 12px;
}

.share-help text {
  fill: #c8f0ff;
  font-size: 23px;
  font-weight: bold;
}

.ime {
  position: absolute;
  right: 0;
  bottom: 37px;
  display: flex;
  align-items: center;
  gap: 9px;
  width: 176px;
  height: 25px;
  padding-left: 8px;
  overflow: hidden;
  background: linear-gradient(#fff, #ececec);
  font-size: 16px;
}

.ime svg {
  width: 18px;
  height: 18px;
}

.cursor {
  position: absolute;
  top: 102px;
  left: 486px;
  width: 14px;
  height: 24px;
}

.watermark {
  position: absolute;
  top: 46px;
  right: 78px;
  width: 252px;
  height: 112px;
  fill: #fff;
  opacity: 0.5;
}

.wm-big,
.wm-cut {
  font-size: 54px;
  font-weight: bold;
}

.wm-cut {
  fill: #000;
}

.wm-small {
  font-size: 32px;
}

.stamp {
  position: absolute;
  right: -24px;
  bottom: 12px;
  display: grid;
  grid-template-columns: 102px 82px;
  grid-auto-rows: 106px;
  color: #f00;
  font-size: 74px;
  font-weight: 500;
  line-height: 106px;
  -webkit-text-stroke: 3px #f00;
  text-shadow: 2px 3px 3px rgba(0, 0, 0, 0.4);
}
```
